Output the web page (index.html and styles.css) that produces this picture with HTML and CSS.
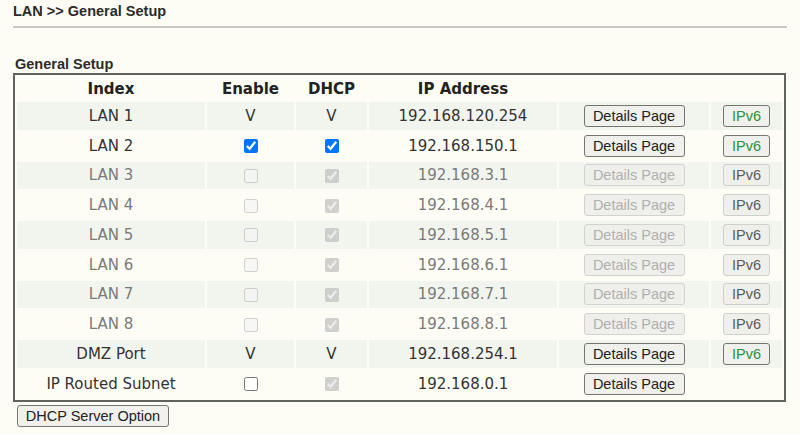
FILE: index.html
```html
<!DOCTYPE html>
<html>
<head>
<meta charset="utf-8">
<link rel="stylesheet" href="styles.css">
</head>
<body>
<div class="page">
  <div class="title">LAN &gt;&gt; General Setup</div>
  <div class="rule"></div>
  <div class="section-label">General Setup</div>
  <table class="grid">
    <colgroup>
      <col class="c1"><col class="c2"><col class="c3"><col class="c4"><col class="c5"><col class="c6">
    </colgroup>
    <thead>
      <tr class="head"><th>Index</th><th>Enable</th><th>DHCP</th><th>IP Address</th><th></th><th></th></tr>
    </thead>
    <tbody>
      <tr class="stripe"><td>LAN 1</td><td>V</td><td>V</td><td>192.168.120.254</td><td><button class="btn details">Details Page</button></td><td><button class="btn v6">IPv6</button></td></tr>
      <tr><td>LAN 2</td><td><input type="checkbox" class="chk" checked></td><td><input type="checkbox" class="chk" checked></td><td>192.168.150.1</td><td><button class="btn details">Details Page</button></td><td><button class="btn v6">IPv6</button></td></tr>
      <tr class="stripe off"><td>LAN 3</td><td><input type="checkbox" class="chk" disabled></td><td><input type="checkbox" class="chk" checked disabled></td><td>192.168.3.1</td><td><button class="btn details" disabled>Details Page</button></td><td><button class="btn v6 dim">IPv6</button></td></tr>
      <tr class="off"><td>LAN 4</td><td><input type="checkbox" class="chk" disabled></td><td><input type="checkbox" class="chk" checked disabled></td><td>192.168.4.1</td><td><button class="btn details" disabled>Details Page</button></td><td><button class="btn v6 dim">IPv6</button></td></tr>
      <tr class="stripe off"><td>LAN 5</td><td><input type="checkbox" class="chk" disabled></td><td><input type="checkbox" class="chk" checked disabled></td><td>192.168.5.1</td><td><button class="btn details" disabled>Details Page</button></td><td><button class="btn v6 dim">IPv6</button></td></tr>
      <tr class="off"><td>LAN 6</td><td><input type="checkbox" class="chk" disabled></td><td><input type="checkbox" class="chk" checked disabled></td><td>192.168.6.1</td><td><button class="btn details" disabled>Details Page</button></td><td><button class="btn v6 dim">IPv6</button></td></tr>
      <tr class="stripe off"><td>LAN 7</td><td><input type="checkbox" class="chk" disabled></td><td><input type="checkbox" class="chk" checked disabled></td><td>192.168.7.1</td><td><button class="btn details" disabled>Details Page</button></td><td><button class="btn v6 dim">IPv6</button></td></tr>
      <tr class="off"><td>LAN 8</td><td><input type="checkbox" class="chk" disabled></td><td><input type="checkbox" class="chk" checked disabled></td><td>192.168.8.1</td><td><button class="btn details" disabled>Details Page</button></td><td><button class="btn v6 dim">IPv6</button></td></tr>
      <tr class="stripe"><td>DMZ Port</td><td>V</td><td>V</td><td>192.168.254.1</td><td><button class="btn details">Details Page</button></td><td><button class="btn v6">IPv6</button></td></tr>
      <tr><td>IP Routed Subnet</td><td><input type="checkbox" class="chk"></td><td><input type="checkbox" class="chk" checked disabled></td><td>192.168.0.1</td><td><button class="btn details">Details Page</button></td><td></td></tr>
    </tbody>
  </table>
  <button class="btn option">DHCP Server Option</button>
</div>
</body>
</html>
```
FILE: styles.css
```css
html, body {
  margin: 0;
  padding: 0;
  background: #fdfdf6;
}
.page {
  padding: 0 13px 0 13px;
  width: 774px;
  font-family: "DejaVu Sans", Verdana, sans-serif;
  color: #333;
}
.title {
  font-family: "Liberation Sans", Arial, sans-serif;
  font-weight: bold;
  font-size: 14.5px;
  line-height: 20px;
  padding-top: 1px;
  color: #2b2b2b;
}
.rule {
  height: 2px;
  background: #c8c8c4;
  margin-top: 5px;
}
.section-label {
  font-family: "Liberation Sans", Arial, sans-serif;
  font-weight: bold;
  font-size: 14.5px;
  line-height: 18px;
  margin-top: 27px;
  margin-left: 2px;
  color: #2b2b2b;
}
.grid {
  margin-top: 0;
  width: 773px;
  table-layout: fixed;
  border-collapse: separate;
  border-spacing: 2px;
  border: 2px solid #5f635c;
}
.c1 { width: 188px; }
.c2 { width: 87px; }
.c3 { width: 71px; }
.c4 { width: 188px; }
.c5 { width: 150px; }
.c6 { width: 71px; }
.grid th, .grid td {
  padding: 0;
  text-align: center;
  vertical-align: middle;
}
.grid th {
  font-weight: bold;
  font-size: 15px;
  height: 23px;
  color: #222;
}
.grid td {
  font-size: 15px;
  height: 27.75px;
  color: #333;
}
.grid tr.stripe td {
  background: #f2f5ee;
}
.grid tr.off td {
  color: #7a7a7a;
}
.chk {
  margin: 0;
  width: 14px;
  height: 14px;
  vertical-align: middle;
}
.btn {
  font-family: "Liberation Sans", Arial, sans-serif;
  font-size: 14.5px;
  height: 22px;
  padding: 0;
  border: 1px solid #76766f;
  border-radius: 3px;
  background: #f0f0ec;
  color: #222;
  vertical-align: middle;
}
.details { width: 101px; }
.v6 { width: 47px; color: #2f8f3a; }
.v6.dim {
  color: #5a5a5a;
  border-color: #cfcfcb;
  background: #efefeb;
}
.btn:disabled {
  color: #b0b0b0;
  border-color: #d2d2ce;
  background: #efefeb;
}
.option {
  width: 152px;
  margin-top: 3px;
  margin-left: 4px;
  display: block;
}
```
